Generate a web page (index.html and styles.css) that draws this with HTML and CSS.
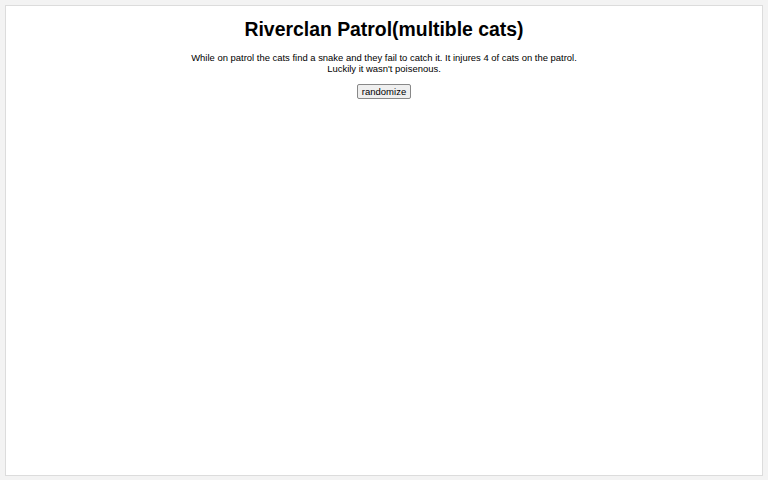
FILE: index.html
```html
<!DOCTYPE html>
<html>
<head>
<meta charset="utf-8">
<link rel="stylesheet" href="styles.css">
</head>
<body>
<div class="panel">
  <h1 class="title">Riverclan Patrol(multible cats)</h1>
  <p class="story">While on patrol the cats find a snake and they fail to catch it. It injures 4 of cats on the patrol.<br>Luckily it wasn't poisenous.</p>
  <div class="actions"><button class="btn">randomize</button></div>
</div>
</body>
</html>
```
FILE: styles.css
```css
html, body { margin: 0; padding: 0; }
body {
  background: #f3f3f3;
  padding: 5px;
  font-family: "Liberation Sans", Arial, sans-serif;
  box-sizing: border-box;
  height: 480px;
}
.panel {
  background: #fff;
  border: 1px solid #dcdcdc;
  height: 471px;
  box-sizing: border-box;
  text-align: center;
  padding-top: 11px;
}
.title {
  margin: 0;
  font-size: 19.4px;
  font-weight: bold;
  line-height: 24px;
  color: #000;
}
.story {
  margin: 11px 0 0 0;
  font-size: 9.45px;
  line-height: 11px;
  color: #000;
}
.actions { margin-top: 10px; line-height: 0; }
.btn {
  font-family: "Liberation Sans", Arial, sans-serif;
  font-size: 9.5px;
  padding: 1px 4px;
  border: 1px solid #888;
  border-radius: 2px;
  background: #efefef;
  color: #000;
  line-height: 11px;
  height: 15px;
  vertical-align: top;
}
```
